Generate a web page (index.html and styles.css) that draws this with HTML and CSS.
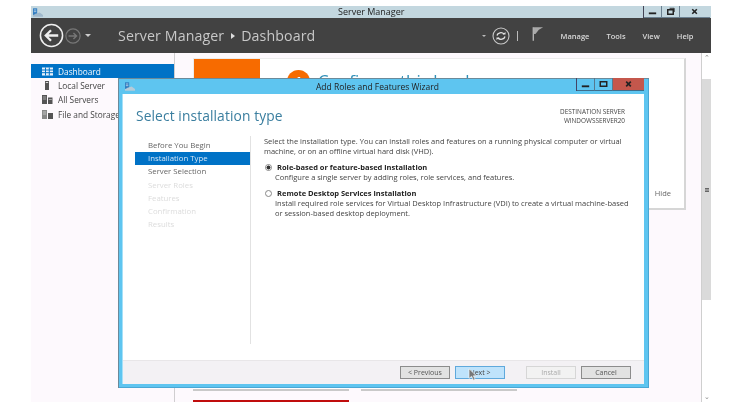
FILE: index.html
```html
<!DOCTYPE html>
<html lang="en">
<head>
<meta charset="utf-8">
<title>Server Manager</title>
<link rel="stylesheet" href="styles.css">
</head>
<body>
<div class="app">
  <div class="titlebar">
    <svg class="appicon" viewBox="0 0 12 10"><path d="M0 0h5v8H0z" fill="#2f7cc0"/><path d="M1 2h3M1 4h3" stroke="#fff" stroke-width=".7"/><path d="M5 6l3-1 4 3v2H0V8z" fill="#9fb9cc"/></svg>
    <span class="titlebar-text">Server Manager</span>
    <div class="winbtns">
      <span class="winbtn"><svg viewBox="0 0 18 12"><path d="M5 8h8" stroke="#222" stroke-width="2"/></svg></span>
      <span class="winbtn"><svg viewBox="0 0 18 12"><path d="M6 4h6v5H6z" fill="none" stroke="#222" stroke-width="1.6"/><path d="M8 2.500h5v4" fill="none" stroke="#222"/></svg></span>
      <span class="winbtn wide"><svg viewBox="0 0 30 12"><path d="M12 3.500l5 5m0-5l-5 5" stroke="#222" stroke-width="1.700"/></svg></span>
    </div>
  </div>
  <header class="header">
    <div class="nav-arrows">
      <svg class="back" viewBox="0 0 26 26"><circle cx="13" cy="13" r="11.500" fill="none" stroke="#eee" stroke-width="1.600"/><path d="M20 13H7M12.500 7.500L7 13l5.500 5.500" fill="none" stroke="#eee" stroke-width="2.400"/></svg>
      <svg class="fwd" viewBox="0 0 18 18"><circle cx="9" cy="9" r="8" fill="none" stroke="#777" stroke-width="1.300"/><path d="M4 9h9M9.500 5.500L13 9l-3.500 3.500" fill="none" stroke="#777" stroke-width="1.600"/></svg>
      <span class="caret"></span>
    </div>
    <div class="crumb">Server Manager<span class="crumb-sep"></span>Dashboard</div>
    <div class="tools">
      <span class="caret small"></span>
      <svg class="refresh" viewBox="0 0 18 18"><circle cx="9" cy="9" r="8" fill="none" stroke="#c8c8c8" stroke-width="1.100"/><path d="M5 8.500a4 3.500 0 0 1 7-1.500M13 9.500a4 3.500 0 0 1-7 1.500" fill="none" stroke="#e4e4e4" stroke-width="1.300"/><path d="M10.500 7.500h3v-2.500zM7.500 10.500h-3v2.500z" fill="#e4e4e4"/></svg>
      <span class="tool-sep"></span>
      <svg class="flag" viewBox="0 0 14 16"><path d="M1.500 0v16" stroke="#bbb" stroke-width="1.500"/><path d="M2 0h11L8 3 4 8H2z" fill="#aaa"/></svg>
      <nav class="menu"><span>Manage</span><span>Tools</span><span>View</span><span>Help</span></nav>
    </div>
  </header>
  <div class="body">
    <aside class="sidebar">
      <div class="side-item active">
        <svg class="side-icon" viewBox="0 0 11 8"><path d="M0 0h11v8H0z" fill="#e8f0fa"/><path d="M0 2.500h11M0 5.200h11M3.500 0v8M7.300 0v8" stroke="#0072c6"/></svg>Dashboard</div>
      <div class="side-item">
        <svg class="side-icon" viewBox="0 0 11 9"><path d="M3 0h4v9H3z" fill="#555"/><path d="M3.800 1.500h2.400" stroke="#ddd"/></svg>Local Server</div>
      <div class="side-item">
        <svg class="side-icon" viewBox="0 0 11 9"><path d="M0 0h5v9H0zM6 2.500h4.500V9H6z" fill="#555"/><path d="M.8 2h3.400M.8 4h3.400M6.800 4.500h3" stroke="#ccc" stroke-width=".7"/></svg>All Servers</div>
      <div class="side-item">
        <svg class="side-icon" viewBox="0 0 11 9"><path d="M0 0h5v9H0z" fill="#888"/><path d="M6 3h5v6H6z" fill="#555"/><path d="M.8 2h3.400M.8 4h3.400" stroke="#ddd" stroke-width=".7"/></svg>File and Storage Services</div>
    </aside>
    <main class="content">
      <section class="welcome">
        <div class="orange"></div>
        <div class="quick">
          <span class="step">1</span>
          <span class="quick-text">Configure this local server</span>
        </div>
        <span class="hide">Hide</span>
      </section>
      <div class="cards">
        <div class="card"></div>
        <div class="card"></div>
      </div>
      <div class="redbar"></div>
    </main>
    <div class="scrollbar">
      <span class="arrow">&#8963;</span>
      <div class="thumb"><span class="grip"></span></div>
      <span class="arrow down">&#8964;</span>
    </div>
  </div>

  <div class="wizard">
    <div class="wiz-title">
      <svg class="appicon wiz-icon" viewBox="0 0 12 10"><path d="M0 0h5v8H0z" fill="#2f7cc0"/><path d="M1 2h3M1 4h3" stroke="#fff" stroke-width=".7"/><path d="M5 6l3-1 4 3v2H0V8z" fill="#b5cbd9"/></svg>
      <span class="wiz-title-text">Add Roles and Features Wizard</span>
      <div class="wiz-btns">
        <span class="wiz-btn"><svg viewBox="0 0 18 13"><path d="M5 9h8" stroke="#222" stroke-width="2"/></svg></span>
        <span class="wiz-btn"><svg viewBox="0 0 18 13"><path d="M5.500 4h7v5h-7z" fill="none" stroke="#222" stroke-width="1.600"/></svg></span>
        <span class="wiz-btn close"><svg viewBox="0 0 31 13"><path d="M13 4l5 5m0-5l-5 5" stroke="#222" stroke-width="1.800"/></svg></span>
      </div>
    </div>
    <div class="wiz-panel">
      <div class="wiz-head">
        <h1 class="wiz-h1">Select installation type</h1>
        <div class="dest">DESTINATION SERVER<br>WINDOWSSERVER20</div>
      </div>
      <div class="wiz-body">
        <ul class="steps">
          <li class="s-on">Before You Begin</li>
          <li class="s-cur">Installation Type</li>
          <li class="s-on">Server Selection</li>
          <li>Server Roles</li>
          <li>Features</li>
          <li>Confirmation</li>
          <li>Results</li>
        </ul>
        <div class="wiz-main">
          <p class="intro">Select the installation type. You can install roles and features on a running physical computer or virtual machine, or on an offline virtual hard disk (VHD).</p>
          <div class="opt">
            <span class="radio checked"></span>
            <div>
              <div class="opt-title">Role-based or feature-based installation</div>
              <div class="opt-text">Configure a single server by adding roles, role services, and features.</div>
            </div>
          </div>
          <div class="opt">
            <span class="radio"></span>
            <div>
              <div class="opt-title">Remote Desktop Services installation</div>
              <div class="opt-text">Install required role services for Virtual Desktop Infrastructure (VDI) to create a virtual machine-based or session-based desktop deployment.</div>
            </div>
          </div>
        </div>
      </div>
      <div class="wiz-foot">
        <span class="btn">&lt; Previous</span>
        <span class="btn hot">Next &gt;</span>
        <span class="btn off">Install</span>
        <span class="btn">Cancel</span>
        <svg class="cursor" viewBox="0 0 10 15"><path d="M1 1v11l3-2.500 2 4.500 2-1-2-4h3.500z" fill="#777" stroke="#fff" stroke-width=".7"/></svg>
      </div>
    </div>
  </div>
</div>
</body>
</html>
```
FILE: styles.css
```css
* { box-sizing: border-box; }
html, body { margin: 0; height: 100%; overflow: hidden; background: #fff; }
body { padding: 6px 28px 0 31px; font-family: "Open Sans", "Liberation Sans", sans-serif; color: #333; }
.app { position: relative; width: 680px; height: 396px; display: flex; flex-direction: column; overflow: hidden; filter: blur(.35px); }

.titlebar { flex: none; height: 12px; background: #c3d7df; display: flex; align-items: center; position: relative; padding-left: 2px; }
.appicon { flex: none; width: 10px; height: 9px; }
.titlebar-text { position: absolute; left: 307px; top: -1px; font-size: 9px; line-height: 14px; color: #222; }
.winbtns { position: absolute; right: 1px; top: 0; display: flex; height: 12px; border-left: 1px solid #445; }
.winbtn { width: 18px; height: 12px; border-right: 1px solid #6b8090; border-bottom: 1px solid #6b8090; }
.winbtn.wide { width: 30px; border-right: 0; }
.winbtn svg, .wiz-btn svg { display: block; width: 100%; height: 100%; }

.header { flex: none; height: 35px; background: #424242; display: flex; align-items: center; padding: 0 17.500px 0 8px; }
.nav-arrows { display: flex; align-items: center; width: 79px; }
.back { width: 25px; height: 25px; }
.fwd { width: 16px; height: 16px; margin: 0 4px 0 1px; }
.caret { width: 0; height: 0; border: 3px solid transparent; border-top: 3px solid #ccc; border-bottom: 0; margin-left: 0; }
.caret.small { border-top-color: #bbb; border-width: 2.500px 2.500px 0; }
.crumb { font-size: 14.200px; line-height: 20px; color: #c8c8c8; letter-spacing: .1px; display: flex; align-items: center; white-space: nowrap; }
.crumb-sep { width: 0; height: 0; border: 3px solid transparent; border-left: 4px solid #ddd; border-right: 0; margin: 0 6px 0 7px; }
.tools { margin-left: auto; display: flex; align-items: center; }
.refresh { width: 18px; height: 18px; margin-left: 6px; }
.tool-sep { width: 1px; height: 10px; background: #bbb; margin: 0 14px 0 7px; }
.flag { width: 12px; height: 14px; margin: -3px 0 0; }
.menu { display: flex; gap: 17px; font-size: 7.500px; font-weight: 600; color: #d8d8d8; margin-left: 17px; }

.body { flex: 1; display: flex; min-height: 0; background: #fdf9fd; }
.sidebar { flex: none; width: 144px; padding-top: 11px; border-right: 1px solid #d0ced0; }
.side-item { height: 14.300px; display: flex; align-items: center; padding-left: 11px; font-size: 8.300px; color: #444; white-space: nowrap; overflow: hidden; }
.side-item.active { background: #0072c6; color: #f4f8fc; }
.side-icon { width: 11px; height: 9px; margin-right: 5px; flex: none; }

.content { flex: 1; min-width: 0; padding: 5px 15px 0 18px; display: flex; flex-direction: column; }
.welcome { flex: none; height: 152px; background: #fff; border: 1px solid #ddd; border-width: 1px 2px 2px 1px; border-color: #ececec #d6d6d6 #d6d6d6 #ececec; display: flex; position: relative; }
.orange { width: 66px; height: 62px; background: #f76b00; }
.quick { display: flex; align-items: flex-start; padding: 11px 0 0 27px; }
.step { width: 23px; height: 23px; border-radius: 50%; background: #f76b00; color: #fff; text-align: center; font-size: 13px; font-weight: 700; line-height: 23px; }
.quick-text { font-size: 17px; color: #2f8fb8; margin: 1px 0 0 8px; line-height: 20px; white-space: nowrap; }
.hide { position: absolute; right: 13px; bottom: 9px; font-size: 7.500px; color: #666; line-height: 12px; }
.cards { display: flex; gap: 12px; margin-top: 178px; }
.card { width: 156px; height: 3px; background: #fff; border-bottom: 2px solid #c9c9c9; }
.redbar { width: 156px; height: 10px; margin-top: 9px; background: #c00d0d; }

.scrollbar { flex: none; width: 10px; background: #fff; border-left: 1px solid #cfcfcf; display: flex; flex-direction: column; align-items: center; position: relative; }
.arrow { height: 26px; font-size: 7px; color: #888; line-height: 10px; }
.thumb { flex: none; width: 100%; height: 221px; background: #dadada; display: flex; align-items: center; justify-content: center; }
.grip { width: 4px; height: 4px; border-top: 1px solid #666; border-bottom: 1px solid #666; background: #999; }
.arrow.down { margin-top: auto; height: 8px; line-height: 6px; }

.wizard { position: absolute; left: 87px; top: 72px; width: 531px; height: 310px; background: #5ec5f0; border: 1px solid #6b8a9a; border-width: 1px 0 0 1px; box-shadow: inset -1px -1px 0 #4aa7d4; padding: 0 5px 4px 4px; display: flex; flex-direction: column; }
.wiz-title { flex: none; height: 15px; position: relative; display: flex; align-items: center; }
.wiz-icon { margin-left: 2px; }
.wiz-title-text { position: absolute; left: 193px; top: 1px; font-size: 8.500px; line-height: 14px; color: #222; }
.wiz-btns { position: absolute; right: 0; top: -1px; display: flex; height: 13px; border-left: 1px solid #446; }
.wiz-btn { width: 18px; height: 13px; border-right: 1px solid #56798f; border-bottom: 1px solid #3f6e8c; }
.wiz-btn.close { width: 31px; background: #c4574c; border-right: 0; }

.wiz-panel { flex: 1; min-height: 0; background: #fff; display: flex; flex-direction: column; box-shadow: -1px 0 0 #a5e0f8; }
.wiz-head { flex: none; height: 42px; padding: 12px 19px 0 13px; display: flex; justify-content: space-between; }
.wiz-h1 { margin: 0; font-size: 13.800px; font-weight: 400; line-height: 20px; color: #3a7e9f; letter-spacing: .1px; }
.dest { margin-top: 2px; font-size: 6.400px; line-height: 8.500px; text-align: right; color: #444; }
.wiz-body { flex: 1; min-height: 0; display: flex; }
.steps { flex: none; width: 115px; height: 205px; margin: 0 0 0 12px; padding: 3px 0 0; list-style: none; border-right: 1px solid #e2e2e2; font-size: 7.800px; color: #dcdcdc; box-sizing: content-box; }
.steps li { height: 13.200px; line-height: 13.200px; padding-left: 13px; white-space: nowrap; }
.steps .s-on { color: #666; }
.steps .s-cur { background: #0072c6; color: #d4e6f6; }
.wiz-main { flex: 1; min-width: 0; padding: 1px 10px 0 13px; }
.intro { margin: 0 0 6px; font-size: 7.500px; line-height: 9.500px; color: #444; }
.opt { display: flex; margin-bottom: 6px; }
.radio { flex: none; width: 7px; height: 7px; margin: 1.500px 3px 0 1px; border: 1px solid #888; border-radius: 50%; background: #fff; }
.radio.checked { background: radial-gradient(circle, #333 0 1.800px, #fff 2.200px); }
.opt-title { font-size: 7.500px; font-weight: 700; line-height: 10px; color: #222; padding-left: 2px; }
.opt-text { font-size: 7.500px; line-height: 10px; color: #444; }

.wiz-foot { flex: none; height: 24px; background: #f3f1f4; border-top: 1px solid #e8e6e8; display: flex; align-items: center; padding: 0 13px 0 277px; position: relative; }
.btn { width: 50px; height: 13px; margin-left: 5px; border: 1px solid #8c8c8c; background: #e2e2e2; font-size: 7px; line-height: 11px; text-align: center; color: #555; }
.btn:first-child { margin-left: 0; }
.btn.hot { border-color: #5fa9dc; background: #bfe3fb; margin-left: 5px; color: #444; }
.btn.off { border-color: #d6d6d6; background: #f2f2f2; color: #aaa; margin-left: 21px; }
.cursor { position: absolute; left: 345px; top: 7px; width: 9px; height: 13px; }
```
